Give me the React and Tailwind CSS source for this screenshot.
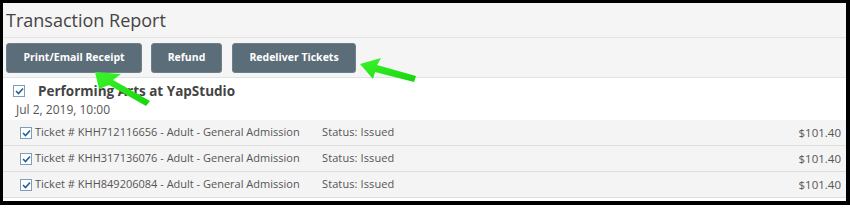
import React from "react";

const tickets = [
  { id: "KHH712116656", price: "$101.40" },
  { id: "KHH317136076", price: "$101.40" },
  { id: "KHH849206084", price: "$101.40" },
];

const CheckBox = () => (
  <span className="flex h-[12px] w-[12px] shrink-0 items-center justify-center border border-[#7f9db9] bg-white">
    <svg width="9" height="8" viewBox="0 0 9 8">
      <path d="M1 4l2.5 2.5L8 1.5" fill="none" stroke="#1f5f9e" strokeWidth="1.6" />
    </svg>
  </span>
);

const Arrows = () => (
  <svg className="pointer-events-none absolute left-0 top-0" width="850" height="209">
    <defs>
      <linearGradient id="g1" x1="0" y1="0" x2="1" y2="1">
        <stop offset="0" stopColor="#3af52a" />
        <stop offset="1" stopColor="#18d40c" />
      </linearGradient>
    </defs>
    <polygon
      points="95,72 121,74 113,80 150,101 146,106 109,85 99,89"
      fill="url(#g1)"
    />
    <polygon
      points="360,64 381,58 377,65 416,76 414,82 375,72 373,79"
      fill="url(#g1)"
    />
  </svg>
);

export default function App() {
  return (
    <div
      className="relative h-[209px] w-[850px] bg-white"
      style={{ fontFamily: '"Open Sans", "Liberation Sans", sans-serif' }}
    >
      <div className="h-[205px] w-[850px] border-b-[4px] border-l-[3px] border-r-[4px] border-t-[3px] border-black bg-white">
        <div className="flex h-[35px] items-center border-b border-[#e4e4e4] bg-[#f5f5f5] pl-[3px]">
          <h1 className="text-[18px] leading-none text-[#444]">Transaction Report</h1>
        </div>
        <div className="flex h-[40px] items-center gap-[9px] border-b border-[#e2e2e2] bg-[#f5f5f5] pl-[3px] pt-[1px]">
          <button className="h-[30px] w-[136px] rounded-[3px] border border-[#6d7f8a] bg-[#5a6d79] text-[10.5px] font-bold text-white">
            Print/Email Receipt
          </button>
          <button className="h-[30px] w-[71px] rounded-[3px] border border-[#6d7f8a] bg-[#5a6d79] text-[10.5px] font-bold text-white">
            Refund
          </button>
          <button className="ml-[1px] h-[30px] w-[124px] rounded-[3px] border border-[#6d7f8a] bg-[#5a6d79] text-[10.5px] font-bold text-white">
            Redeliver Tickets
          </button>
        </div>
        <div className="flex items-center gap-[13px] pl-[10px] pt-[4px]">
          <CheckBox />
          <span className="text-[13.5px] font-bold leading-[18px] text-[#444]">
            Performing Arts at YapStudio
          </span>
        </div>
        <div className="pl-[13px] pt-[1px] text-[12px] leading-[18px] text-[#555]">
          Jul 2, 2019, 10:00
        </div>
        <div className="mt-[1px]">
          {tickets.map((t) => (
            <div
              key={t.id}
              className="flex h-[26px] items-center whitespace-nowrap border-b border-[#dedede] bg-[#f4f4f4] pl-[17px] pr-[5px] text-[11px] text-[#555]"
            >
              <CheckBox />
              <span className="ml-[3px] w-[287px] shrink-0">
                Ticket # {t.id} - Adult - General Admission
              </span>
              <span className="tracking-[0.1px]">Status: Issued</span>
              <span className="ml-auto text-[11.5px]">{t.price}</span>
            </div>
          ))}
        </div>
      </div>
      <Arrows />
    </div>
  );
}
